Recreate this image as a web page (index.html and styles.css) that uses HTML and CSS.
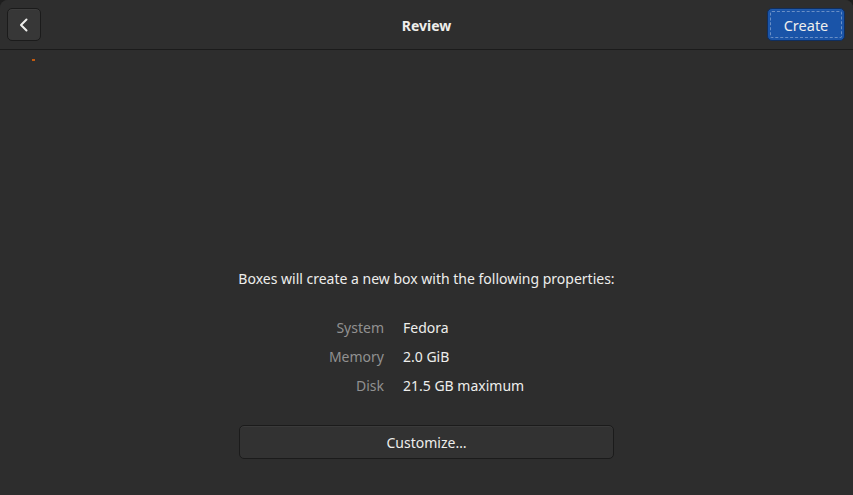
FILE: index.html
```html
<!DOCTYPE html>
<html>
<head>
<meta charset="utf-8">
<link rel="stylesheet" href="styles.css">
</head>
<body>
<div class="window">
  <header class="headerbar">
    <button class="btn back" aria-label="Back">
      <svg width="16" height="16" viewBox="0 0 16 16"><path d="M10.5 2.5 L5 8 L10.5 13.5" fill="none" stroke="#eeeeec" stroke-width="2" stroke-linecap="round" stroke-linejoin="round"/></svg>
    </button>
    <div class="title">Review</div>
    <button class="btn create">Create</button>
  </header>
  <main class="content">
    <span class="spark"></span>
    <div class="summary">
      <p class="intro">Boxes will create a new box with the following properties:</p>
      <div class="props">
        <span class="label">System</span><span class="value">Fedora</span>
        <span class="label">Memory</span><span class="value">2.0 GiB</span>
        <span class="label">Disk</span><span class="value">21.5 GB maximum</span>
      </div>
      <button class="btn customize">Customize…</button>
    </div>
  </main>
</div>
</body>
</html>
```
FILE: styles.css
```css
* { box-sizing: border-box; }
html, body { margin: 0; padding: 0; height: 100%; background: #1e1e1e; }
body { font-family: "Noto Sans", "Open Sans", sans-serif; color: #eeeeec; }
.window {
  width: 853px; height: 495px;
  display: flex; flex-direction: column;
  background: #2d2d2d;
  border-radius: 8px 8px 0 0;
  overflow: hidden;
}
.headerbar {
  height: 50px;
  flex: none;
  display: flex; align-items: center; justify-content: space-between;
  padding: 0 7px 0 7px;
  background: #2e2e2e;
  border-bottom: 1px solid #1b1b1b;
  position: relative;
}
.btn {
  font-family: inherit;
  color: #eeeeec;
  border: 1px solid #1b1b1b;
  border-radius: 5px;
  background: #373737;
  box-shadow: inset 0 1px rgba(255,255,255,0.04);
  cursor: pointer;
}
.back {
  width: 34px; height: 33px;
  display: flex; align-items: center; justify-content: center;
  padding: 0;
}
.title {
  position: absolute; left: 0; right: 0; text-align: center;
  font-weight: bold; font-size: 14px; pointer-events: none;
  padding-top: 1px;
}
.create {
  width: 78px; height: 33px;
  background: #1a54a8;
  border-color: #0f2e5e;
  font-size: 14.5px;
  outline: 1px dashed rgba(255,255,255,0.35);
  outline-offset: -4px;
  margin-right: 1px;
}
.content {
  flex: 1;
  position: relative;
  display: flex; flex-direction: column; align-items: center;
  padding-top: 216px;
}
.spark {
  position: absolute; left: 32px; top: 9px;
  width: 3px; height: 2px; background: #c05a10;
}
.summary { display: flex; flex-direction: column; align-items: center; }
.intro { margin: 0; font-size: 14px; line-height: 26px; }
.props {
  display: grid;
  grid-template-columns: 145px auto;
  column-gap: 19px;
  row-gap: 3px;
  margin-top: 23px;
  font-size: 14px;
  line-height: 26px;
  width: 375px;
}
.label { text-align: right; color: #919191; }
.value { color: #eeeeec; }
.customize {
  margin-top: 26px;
  width: 375px; height: 34px;
  font-size: 14px;
  background: #323232;
}
```
